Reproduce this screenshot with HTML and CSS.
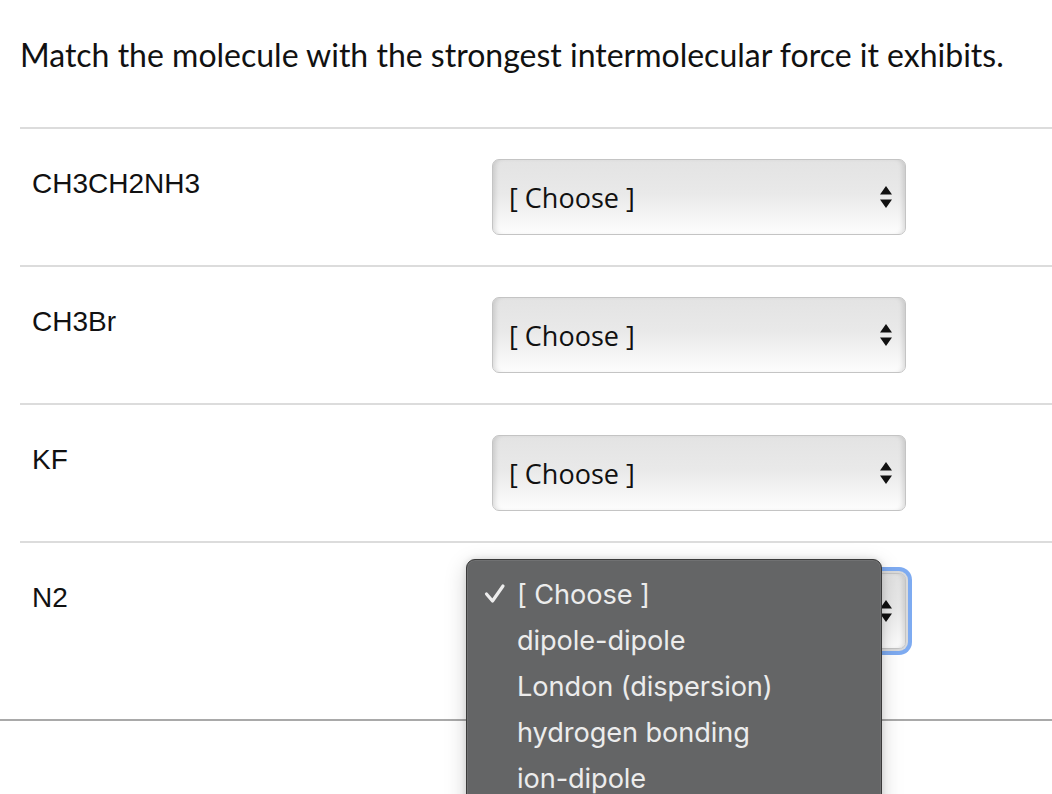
FILE: index.html
```html
<!DOCTYPE html>
<html>
<head>
<meta charset="utf-8">
<link rel="stylesheet" href="styles.css">
</head>
<body>
<div class="page">
  <div class="question">
    <p class="title">Match the molecule with the strongest intermolecular force it exhibits.</p>
    <div class="rows">
      <div class="row">
        <div class="label">CH3CH2NH3</div>
        <div class="select"><span class="value">[ Choose ]</span><span class="arrows"><svg width="12" height="23" viewBox="0 0 12 23"><path d="M6 0 L12 8.5 L0 8.5 Z M0 13.5 L12 13.5 L6 22 Z" fill="#111"/></svg></span></div>
      </div>
      <div class="row">
        <div class="label">CH3Br</div>
        <div class="select"><span class="value">[ Choose ]</span><span class="arrows"><svg width="12" height="23" viewBox="0 0 12 23"><path d="M6 0 L12 8.5 L0 8.5 Z M0 13.5 L12 13.5 L6 22 Z" fill="#111"/></svg></span></div>
      </div>
      <div class="row">
        <div class="label">KF</div>
        <div class="select"><span class="value">[ Choose ]</span><span class="arrows"><svg width="12" height="23" viewBox="0 0 12 23"><path d="M6 0 L12 8.5 L0 8.5 Z M0 13.5 L12 13.5 L6 22 Z" fill="#111"/></svg></span></div>
      </div>
      <div class="row">
        <div class="label">N2</div>
        <div class="select-wrap">
          <div class="select focused"><span class="value">[ Choose ]</span><span class="arrows"><svg width="12" height="23" viewBox="0 0 12 23"><path d="M6 0 L12 8.5 L0 8.5 Z M0 13.5 L12 13.5 L6 22 Z" fill="#111"/></svg></span></div>
          <div class="menu">
            <div class="item checked"><svg class="check" width="22" height="22" viewBox="0 0 22 22"><path d="M2.5 11 L8.5 18 L19 3" fill="none" stroke="#ededed" stroke-width="3.2" stroke-linecap="round" stroke-linejoin="round"/></svg>[ Choose ]</div>
            <div class="item">dipole-dipole</div>
            <div class="item">London (dispersion)</div>
            <div class="item">hydrogen bonding</div>
            <div class="item">ion-dipole</div>
          </div>
        </div>
      </div>
    </div>
  </div>
  <div class="footer-line"></div>
</div>
</body>
</html>
```

FILE: styles.css
```css
html, body {
  margin: 0;
  padding: 0;
  background: #fff;
}
.page {
  width: 1052px;
  height: 794px;
  overflow: hidden;
  position: relative;
}
.question {
  padding: 36px 0 0 20px;
}
.title {
  margin: 0 0 53px 0;
  font-family: Lato, "Liberation Sans", sans-serif;
  font-size: 32px;
  line-height: 38px;
  color: #111;
}
.rows {
  display: flex;
  flex-direction: column;
}
.row {
  display: flex;
  align-items: flex-start;
  border-top: 2px solid #dcdcdc;
  padding: 30px 0;
  height: 76px;
}
.label {
  width: 472px;
  padding: 9px 0 0 12px;
  box-sizing: border-box;
  font-family: "Liberation Sans", Arial, sans-serif;
  font-size: 28px;
  line-height: 32px;
  color: #111;
}
.select-wrap {
  position: relative;
}
.select {
  width: 414px;
  height: 76px;
  box-sizing: border-box;
  border: 1px solid #c4c4c4;
  border-radius: 7px;
  background: linear-gradient(to bottom, #e3e3e3 0%, #e9e9e9 45%, #f6f6f6 80%, #fdfdfd 100%);
  box-shadow: inset 5px 0 5px -3px rgba(0,0,0,0.13), inset -5px 0 5px -3px rgba(0,0,0,0.13);
  display: flex;
  align-items: center;
  justify-content: space-between;
  padding: 0 13px 0 16px;
}
.select.focused {
  box-shadow: inset 5px 0 5px -3px rgba(0,0,0,0.13), inset -5px 0 5px -3px rgba(0,0,0,0.13), 0 0 0 2px #dadada, 0 0 0 6px #7eabf1;
}
.value {
  font-family: "Open Sans", "Noto Sans", sans-serif;
  font-size: 27px;
  color: #111;
}
.arrows {
  display: flex;
  align-items: center;
  padding-top: 1px;
}
.arrows svg {
  display: block;
}
.menu {
  position: absolute;
  left: -26px;
  top: -14px;
  width: 416px;
  height: 260px;
  box-sizing: border-box;
  background: #646566;
  border: 1px solid #3a3a3a;
  border-radius: 9px;
  box-shadow: 0 0 0 1px rgba(255,255,255,0.08) inset, 0 6px 22px rgba(0,0,0,0.18), 0 0 6px rgba(0,0,0,0.12);
  padding: 11px 0 0 0;
}
.item {
  position: relative;
  height: 46px;
  display: flex;
  align-items: center;
  padding-left: 50px;
  font-family: Inter, "Noto Sans", sans-serif;
  font-size: 27.2px;
  color: #ececec;
  letter-spacing: -0.1px;
}
.check {
  position: absolute;
  left: 17px;
  top: 12px;
}
.footer-line {
  margin-top: 40px;
  height: 2px;
  background: #a9a9a9;
  width: 1052px;
}
```
